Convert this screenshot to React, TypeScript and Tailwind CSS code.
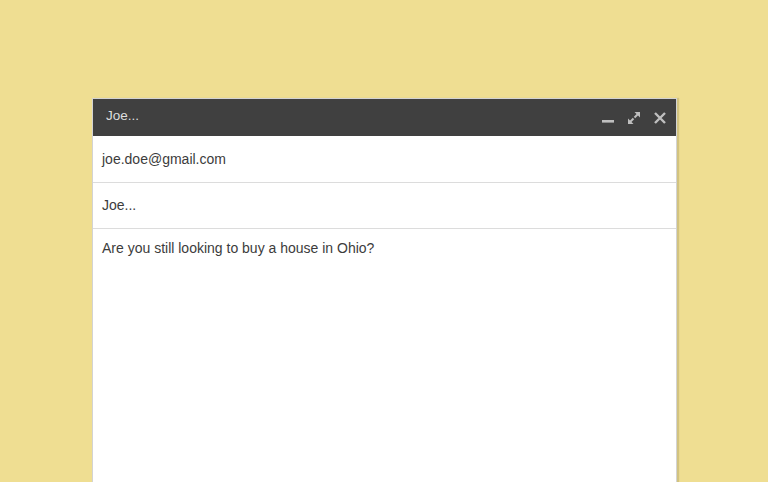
export default function App() {
  return (
    <div className="min-h-screen bg-[#efde92] pl-[92px] pt-[98px] font-['Liberation_Sans',Arial,sans-serif]">
      <div className="flex h-[384px] w-[585px] flex-col border border-b-0 border-[#d3d3d3] bg-white shadow-[2px_0_1px_rgba(0,0,0,0.12)]">
        <div className="flex h-[37px] items-center justify-between bg-[#404040] pl-[13px] pr-[10px]">
          <span className="-mt-[2px] text-[13.5px] text-[#dedede]">Joe...</span>
          <div className="flex items-center gap-[14px] text-[#bfbfbf]">
            <svg width="12" height="12" viewBox="0 0 12 12" className="mt-[1px]">
              <rect x="0" y="8" width="12" height="2.6" fill="currentColor" />
            </svg>
            <svg width="12" height="12" viewBox="0 0 12 12">
              <polygon points="6.5,0 12,0 12,5.5" fill="currentColor" />
              <polygon points="0,6.5 0,12 5.5,12" fill="currentColor" />
              <line x1="10" y1="2" x2="6.5" y2="5.5" stroke="currentColor" strokeWidth="2" />
              <line x1="2" y1="10" x2="5.5" y2="6.5" stroke="currentColor" strokeWidth="2" />
            </svg>
            <svg width="12" height="12" viewBox="0 0 12 12">
              <path d="M1 1 L11 11 M11 1 L1 11" stroke="currentColor" strokeWidth="2.4" />
            </svg>
          </div>
        </div>
        <div className="flex h-[47px] items-center border-b border-[#dcdcdc] px-[9px] text-[14px] text-[#3c3c3c]">
          joe.doe@gmail.com
        </div>
        <div className="flex h-[46px] items-center border-b border-[#dcdcdc] px-[9px] text-[14px] text-[#3c3c3c]">
          Joe...
        </div>
        <div className="flex-1 px-[9px] pt-[9px] text-[14px] leading-5 text-[#3c3c3c]">
          Are you still looking to buy a house in Ohio?
        </div>
      </div>
    </div>
  );
}
